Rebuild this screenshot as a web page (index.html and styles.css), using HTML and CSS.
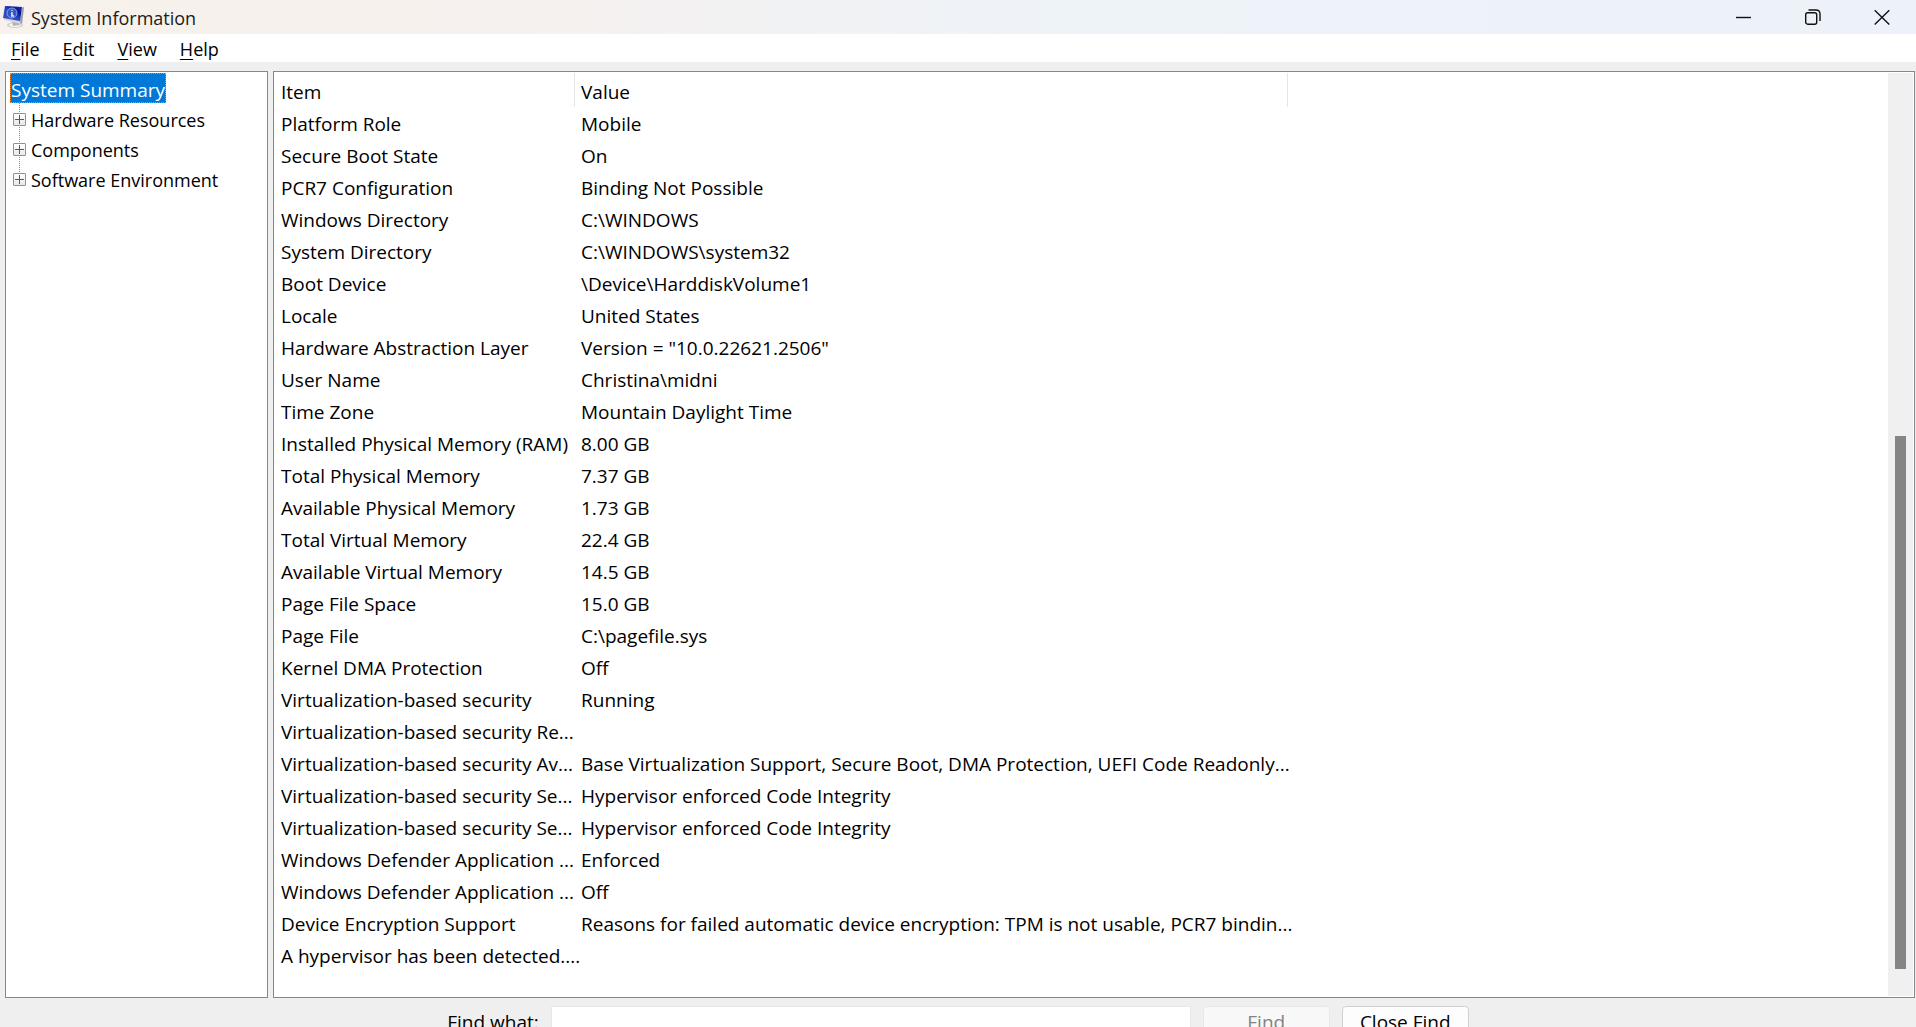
FILE: index.html
```html
<!DOCTYPE html>
<html lang="en">
  <head>
    <meta charset="UTF-8" />
    <meta name="viewport" content="width=device-width, initial-scale=1.0" />
    <title>System Information</title>
    <link rel="stylesheet" href="styles.css">
  </head>
  <body>
    <header class="titlebar">
      <svg class="app-icon" viewBox="0 0 22 24" aria-hidden="true">
        <defs>
          <linearGradient id="screen" x1="0" y1="1" x2="1" y2="0">
            <stop offset="0" stop-color="#3a58c0" />
            <stop offset="0.5" stop-color="#2444c4" />
            <stop offset="0.7" stop-color="#0a1490" />
            <stop offset="1" stop-color="#1434d8" />
          </linearGradient>
        </defs>
        <ellipse cx="12" cy="20" rx="8" ry="3" fill="#cfcecd" />
        <ellipse cx="12" cy="20" rx="6" ry="2" fill="#f4f4f3" />
        <path d="M9 15l7 2 1 3-7 1z" fill="#b4b3b6" />
        <path d="M2 1L21 2L19 19L1 15Z" fill="#d5d6df" />
        <path d="M19 3L21 2L19 19L17 18Z" fill="#9c9da8" />
        <path d="M2 1L19 2L17 16L0 13Z" fill="url(#screen)" />
        <circle cx="9" cy="8" r="5" fill="#3457c4" stroke="#8aa4e2" />
        <path d="M9 5v1M8 8h1v3M8 11h3" fill="none" stroke="#e4edff" stroke-width="1.5" />
      </svg>
      <h1 class="title">System Information</h1>
      <div class="window-buttons">
        <button class="window-btn" aria-label="Minimize">
          <svg viewBox="0 0 16 16"><path d="M0 8.5h15" /></svg>
        </button>
        <button class="window-btn" aria-label="Restore">
          <svg viewBox="0 0 16 16">
            <rect x="0.7" y="3.7" width="11" height="11.5" rx="2" />
            <path d="M3.5 1H11q4 0 4 4v7" />
          </svg>
        </button>
        <button class="window-btn" aria-label="Close">
          <svg viewBox="0 0 16 16"><path d="M0.7 1.2l14.6 14.3M15.3 1.2L0.7 15.5" /></svg>
        </button>
      </div>
    </header>

    <nav class="menubar">
      <button class="menu-item"><u>F</u>ile</button>
      <button class="menu-item"><u>E</u>dit</button>
      <button class="menu-item"><u>V</u>iew</button>
      <button class="menu-item"><u>H</u>elp</button>
    </nav>

    <main class="panes">
      <aside class="tree-pane">
        <button class="tree-root">System Summary</button>
        <ul class="tree">
          <li class="tree-item">
            <button class="expander" aria-label="Expand Hardware Resources"></button>
            <button class="tree-label">Hardware Resources</button>
          </li>
          <li class="tree-item">
            <button class="expander" aria-label="Expand Components"></button>
            <button class="tree-label">Components</button>
          </li>
          <li class="tree-item">
            <button class="expander" aria-label="Expand Software Environment"></button>
            <button class="tree-label">Software Environment</button>
          </li>
        </ul>
      </aside>

      <section class="list-pane">
        <div class="list">
          <table class="details">
            <colgroup>
              <col class="col-item" />
              <col class="col-value" />
            </colgroup>
            <thead>
              <tr><th>Item</th><th>Value</th></tr>
            </thead>
            <tbody>
              <tr><td>Platform Role</td><td>Mobile</td></tr>
              <tr><td>Secure Boot State</td><td>On</td></tr>
              <tr><td>PCR7 Configuration</td><td>Binding Not Possible</td></tr>
              <tr><td>Windows Directory</td><td>C:\WINDOWS</td></tr>
              <tr><td>System Directory</td><td>C:\WINDOWS\system32</td></tr>
              <tr><td>Boot Device</td><td>\Device\HarddiskVolume1</td></tr>
              <tr><td>Locale</td><td>United States</td></tr>
              <tr><td>Hardware Abstraction Layer</td><td>Version = "10.0.22621.2506"</td></tr>
              <tr><td>User Name</td><td>Christina\midni</td></tr>
              <tr><td>Time Zone</td><td>Mountain Daylight Time</td></tr>
              <tr><td>Installed Physical Memory (RAM)</td><td>8.00 GB</td></tr>
              <tr><td>Total Physical Memory</td><td>7.37 GB</td></tr>
              <tr><td>Available Physical Memory</td><td>1.73 GB</td></tr>
              <tr><td>Total Virtual Memory</td><td>22.4 GB</td></tr>
              <tr><td>Available Virtual Memory</td><td>14.5 GB</td></tr>
              <tr><td>Page File Space</td><td>15.0 GB</td></tr>
              <tr><td>Page File</td><td>C:\pagefile.sys</td></tr>
              <tr><td>Kernel DMA Protection</td><td>Off</td></tr>
              <tr><td>Virtualization-based security</td><td>Running</td></tr>
              <tr><td>Virtualization-based security Re...</td><td></td></tr>
              <tr><td>Virtualization-based security Av...</td><td>Base Virtualization Support, Secure Boot, DMA Protection, UEFI Code Readonly...</td></tr>
              <tr><td>Virtualization-based security Se...</td><td>Hypervisor enforced Code Integrity</td></tr>
              <tr><td>Virtualization-based security Se...</td><td>Hypervisor enforced Code Integrity</td></tr>
              <tr><td>Windows Defender Application ...</td><td>Enforced</td></tr>
              <tr><td>Windows Defender Application ...</td><td>Off</td></tr>
              <tr><td>Device Encryption Support</td><td>Reasons for failed automatic device encryption: TPM is not usable, PCR7 bindin...</td></tr>
              <tr><td>A hypervisor has been detected....</td><td></td></tr>
            </tbody>
          </table>
        </div>
        <div class="scrollbar">
          <div class="scroll-thumb"></div>
        </div>
      </section>
    </main>

    <form class="findbar">
      <label class="find-label" for="find-what">Find what:</label>
      <input class="find-input" type="text" id="find-what" />
      <button class="find-btn" type="submit" disabled>Find</button>
      <button class="find-btn" type="button">Close Find</button>
    </form>
  </body>
</html>
```
FILE: styles.css
```css
:root {
  --window-bg: #efefef;
  --pane-border: #828790;
  --selection: #0078d7;
}

* {
  margin: 0;
  padding: 0;
  box-sizing: border-box;
}

body {
  height: 100vh;
  display: flex;
  flex-direction: column;
  overflow: hidden;
  background: var(--window-bg);
  color: #000;
  font-family: "Open Sans", "Noto Sans", sans-serif;
  font-size: 19px;
  line-height: 26px;
}

button,
input {
  font: inherit;
  color: inherit;
  border: none;
  background: none;
}

.titlebar {
  flex: none;
  height: 34px;
  display: flex;
  align-items: center;
  gap: 6px;
  padding-left: 3px;
  background: linear-gradient(90deg, #f8f1ec, #f6f1ee 25%, #eef3f8 55%, #edf2fa);
}

.app-icon {
  width: 22px;
  height: 24px;
}

.title {
  font-size: 18px;
  font-weight: 400;
  color: #1b1b1b;
  padding-top: 2px;
}

.window-buttons {
  display: flex;
  height: 100%;
  margin-left: auto;
}

.window-btn {
  width: 69px;
  display: flex;
  justify-content: center;
  align-items: center;
}

.window-btn svg {
  width: 16px;
  height: 16px;
  fill: none;
  stroke: #111;
  stroke-width: 1.4;
}

.menubar {
  flex: none;
  height: 28px;
  display: flex;
  align-items: center;
  gap: 23px;
  padding: 2px 11px 0;
  background: #fff;
}

.menu-item {
  font-size: 18px;
}

.menu-item u {
  text-underline-offset: 3px;
}

.panes {
  flex: 1;
  min-height: 0;
  display: flex;
  gap: 5px;
  padding: 9px 1px 0 5px;
}

.tree-pane,
.list-pane {
  border: 1px solid var(--pane-border);
  background: #fff;
}

.tree-pane {
  flex: none;
  width: 263px;
  padding: 1px 4px;
}

.tree-root {
  display: block;
  height: 30px;
  padding: 3px 1px 0;
  background: var(--selection);
  color: #fff;
  outline: 1px dotted #ff8728;
  outline-offset: -1px;
  white-space: nowrap;
}

.tree {
  list-style: none;
  margin-left: 3px;
  background: linear-gradient(#888 1px, transparent 1px) 6px 0 / 1px 2px repeat-y;
  height: 80px;
}

.tree-item {
  height: 30px;
  display: flex;
  align-items: center;
  gap: 5px;
  padding-top: 2px;
}

.expander {
  flex: none;
  width: 13px;
  height: 13px;
  border: 1px solid #919191;
  border-radius: 1px;
  background:
    linear-gradient(#3d5b9e, #3d5b9e) center / 9px 1px no-repeat,
    linear-gradient(#3d5b9e, #3d5b9e) center / 1px 9px no-repeat,
    linear-gradient(#fff, #e8e8e8);
}

.tree-label {
  padding-top: 2px;
  font-size: 18px;
  white-space: nowrap;
}

.list-pane {
  flex: 1;
  min-width: 0;
  display: flex;
  padding: 1px;
}

.list {
  flex: 1;
  min-width: 0;
  overflow: hidden;
}

.details {
  table-layout: fixed;
  width: 1013px;
  border-collapse: collapse;
}

.col-item {
  width: 300px;
}

.details th,
.details td {
  height: 32px;
  padding: 0 0 0 6px;
  text-align: left;
  font-weight: 400;
  white-space: nowrap;
}

.details th {
  height: 35px;
  padding-top: 2px;
  background: linear-gradient(#e5e5e5, #e5e5e5) right top / 1px 34px no-repeat;
}

.scrollbar {
  flex: none;
  width: 25px;
  display: flex;
  flex-direction: column;
  align-items: center;
  padding-bottom: 27px;
  background: #f0f0f0;
}

.scroll-thumb {
  width: 11px;
  height: 59.5%;
  margin-top: auto;
  background: #858585;
}

.findbar {
  flex: none;
  height: 29px;
  display: flex;
  justify-content: center;
  align-items: flex-start;
  gap: 12px;
  padding-top: 8px;
}

.find-label {
  padding-top: 3px;
}

.find-input {
  width: 640px;
  height: 32px;
  padding: 0 6px;
  border: 1px solid #e8e8e8;
  background: #fff;
}

.find-btn {
  width: 127px;
  height: 32px;
  border: 1px solid #d0d0d0;
  border-radius: 4px;
  background: #fdfdfd;
  line-height: 24px;
}

.find-btn:disabled {
  border-color: #e8e8e8;
  background: #f8f8f8;
  color: #838383;
}
```
